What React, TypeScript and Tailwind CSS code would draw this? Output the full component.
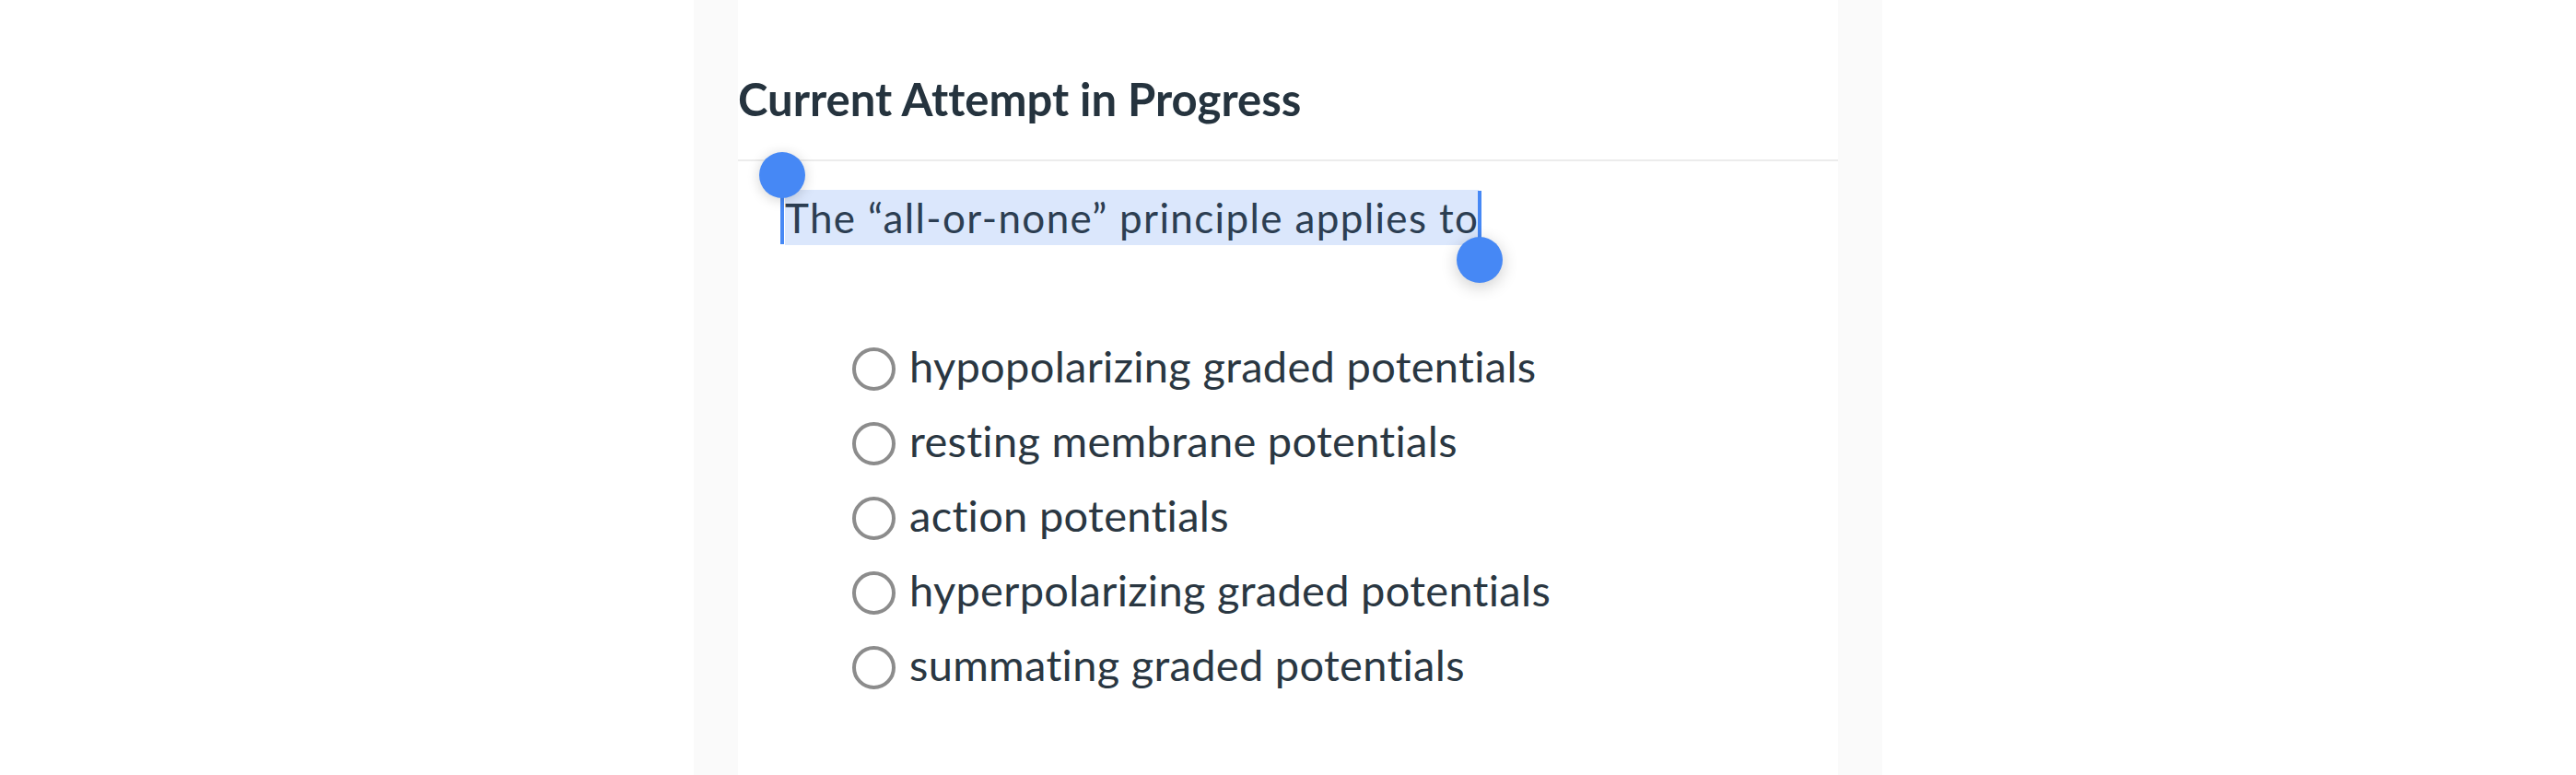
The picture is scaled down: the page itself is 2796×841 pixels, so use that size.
import React from "react";

const options = [
  "hypopolarizing graded potentials",
  "resting membrane potentials",
  "action potentials",
  "hyperpolarizing graded potentials",
  "summating graded potentials",
];

export default function App() {
  return (
    <div
      className="w-full h-[841px] bg-white flex justify-center overflow-hidden [font-variant-ligatures:none]"
      style={{ fontFamily: "Lato, 'Open Sans', sans-serif" }}
    >
      <div className="w-[1290px] h-full bg-[#fafafa] px-[48px]">
        <div className="h-full bg-white flex flex-col">
          <div className="pt-[77px] pb-[36px]">
            <h1 className="text-[49px] leading-[60px] font-bold text-[#25333e]">Current Attempt in Progress</h1>
          </div>
          <div className="h-[2px] bg-[#ececec]" />
          <div className="pt-[31px] pl-[51px]">
            <span className="relative inline-block bg-[#dbe7fc] text-[44px] leading-[60px] tracking-[1.35px] text-[#2c3e52]">
              The “all-or-none” principle applies to
              <span className="absolute left-[-5px] top-[-16px] h-[75px] w-[4px] bg-[#4688f5]" />
              <span className="absolute left-[-28px] top-[-41px] h-[50px] w-[50px] rounded-full bg-[#4688f5] shadow-[0_2px_14px_rgba(0,0,0,0.18)]" />
              <span className="absolute right-[-3px] top-[1px] h-[60px] w-[4px] bg-[#4688f5]" />
              <span className="absolute right-[-26px] top-[51px] h-[50px] w-[50px] rounded-full bg-[#4688f5] shadow-[0_4px_18px_rgba(0,0,0,0.2)]" />
            </span>
          </div>
          <div className="pt-[90px] pl-[124px] flex flex-col">
            {options.map((o) => (
              <label key={o} className="flex h-[81px] items-center gap-[15px]">
                <span className="mt-[8px] h-[47px] w-[47px] shrink-0 rounded-full border-[4px] border-[#8c8c8c] bg-white" />
                <span className="text-[47px] leading-[60px] tracking-[0.3px] text-[#2a3742]">{o}</span>
              </label>
            ))}
          </div>
        </div>
      </div>
    </div>
  );
}
